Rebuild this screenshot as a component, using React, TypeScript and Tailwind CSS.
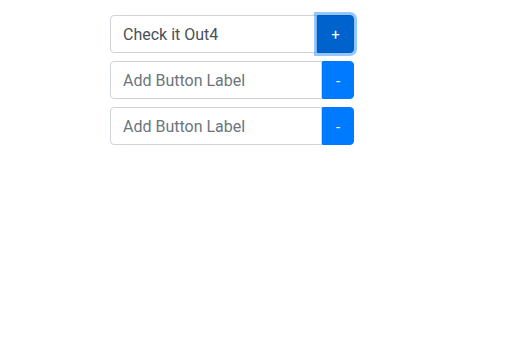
import React from "react";

const rows = [
  { value: "Check it Out4", label: "+", focused: true },
  { value: "", label: "-", focused: false },
  { value: "", label: "-", focused: false },
];

const App = () => {
  return (
    <div
      className="min-h-[340px] bg-white pt-[15px] pl-[110px]"
      style={{ fontFamily: 'Roboto, "Open Sans", sans-serif' }}
    >
      <div className="flex w-[244px] flex-col gap-2">
        {rows.map((row, i) => (
          <div key={i} className="flex h-[38px] items-stretch">
            <input
              readOnly
              value={row.value}
              placeholder="Add Button Label"
              className="min-w-0 flex-1 rounded-l-[4px] border border-[#ced4da] bg-white px-3 pt-[2px] text-[16px] text-[#495057] outline-none placeholder:text-[#6c757d]"
            />
            <button
              className={
                row.focused
                  ? "relative z-10 flex w-[37px] items-center justify-center rounded-r-[4px] border border-[#005cbf] bg-[#0062cc] pt-[2px] text-[15px] text-white shadow-[0_0_0_3px_rgba(38,143,255,0.5)]"
                  : "flex w-[32px] items-center justify-center rounded-r-[4px] border border-[#007bff] bg-[#007bff] pt-[2px] text-[15px] text-white"
              }
            >
              {row.label}
            </button>
          </div>
        ))}
      </div>
    </div>
  );
};

export default App;
